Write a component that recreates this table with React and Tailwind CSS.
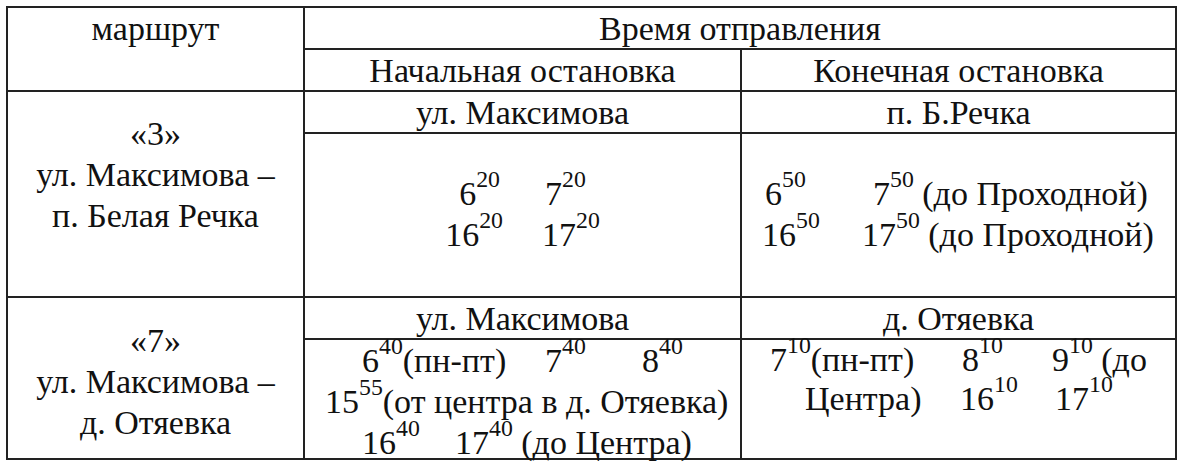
const S = ({ children }) => (
  <sup className="relative -top-[0.75em] text-[0.7em] leading-none">{children}</sup>
);

const cell = "border-r-2 border-b-2 border-[#222] [font-family:Liberation_Serif,Times_New_Roman,serif]";

export default function App() {
  return (
    <div className="w-[1181px] h-[462px] bg-white pl-[6px] pt-[6px] [font-family:Liberation_Serif,Times_New_Roman,serif] text-[34px] leading-[41px] text-[#111]">
      <div className="grid w-[1171px] grid-cols-[297px_437px_435px] grid-rows-[42px_42px_42px_164px_42px_120px] border-l-2 border-t-2 border-[#222]">
        {/* header */}
        <div className={`${cell} row-span-2 text-center`}>маршрут</div>
        <div className={`${cell} col-span-2 text-center`}>Время отправления</div>
        <div className={`${cell} text-center`}>Начальная остановка</div>
        <div className={`${cell} text-center`}>Конечная остановка</div>

        {/* маршрут 3 */}
        <div className={`${cell} row-span-2 flex flex-col items-center justify-center pb-[40px]`}>
          <div>«3»</div>
          <div>ул. Максимова –</div>
          <div>п. Белая Речка</div>
        </div>
        <div className={`${cell} text-center`}>ул. Максимова</div>
        <div className={`${cell} text-center`}>п. Б.Речка</div>
        <div className={`${cell} flex flex-col items-center justify-center pb-[3px]`}>
          <div>
            <span>6<S>20</S></span>
            <span className="ml-[45px]">7<S>20</S></span>
          </div>
          <div>
            <span>16<S>20</S></span>
            <span className="ml-[39px]">17<S>20</S></span>
          </div>
        </div>
        <div className={`${cell} flex flex-col justify-center whitespace-nowrap pb-[3px]`}>
          <div className="pl-[23px]">
            <span className="inline-block w-[108px]">6<S>50</S></span>
            <span>7<S>50</S> (до Проходной)</span>
          </div>
          <div className="pl-[20px]">
            <span className="inline-block w-[100px]">16<S>50</S></span>
            <span>17<S>50</S> (до Проходной)</span>
          </div>
        </div>

        {/* маршрут 7 */}
        <div className={`${cell} row-span-2 flex flex-col items-center justify-center pt-[6px]`}>
          <div>«7»</div>
          <div>ул. Максимова –</div>
          <div>д. Отяевка</div>
        </div>
        <div className={`${cell} text-center`}>ул. Максимова</div>
        <div className={`${cell} text-center`}>д. Отяевка</div>
        <div className={`${cell} whitespace-nowrap`}>
          <div className="pl-[57px]">
            <span className="inline-block w-[183px]">6<S>40</S>(пн-пт)</span>
            <span className="inline-block w-[97px]">7<S>40</S></span>
            <span>8<S>40</S></span>
          </div>
          <div className="pl-[20px]">
            15<S>55</S>(от центра в д. Отяевка)
          </div>
          <div className="pl-[57px]">
            <span className="inline-block w-[93px]">16<S>40</S></span>
            <span>17<S>40</S> (до Центра)</span>
          </div>
        </div>
        <div className={`${cell} whitespace-nowrap leading-[39px]`}>
          <div className="pl-[28px]">
            <span className="inline-block w-[192px]">7<S>10</S>(пн-пт)</span>
            <span className="inline-block w-[90px]">8<S>10</S></span>
            <span>9<S>10</S> (до</span>
          </div>
          <div className="pl-[63px]">
            <span className="inline-block w-[155px]">Центра)</span>
            <span className="inline-block w-[95px]">16<S>10</S></span>
            <span>17<S>10</S></span>
          </div>
        </div>
      </div>
    </div>
  );
}
